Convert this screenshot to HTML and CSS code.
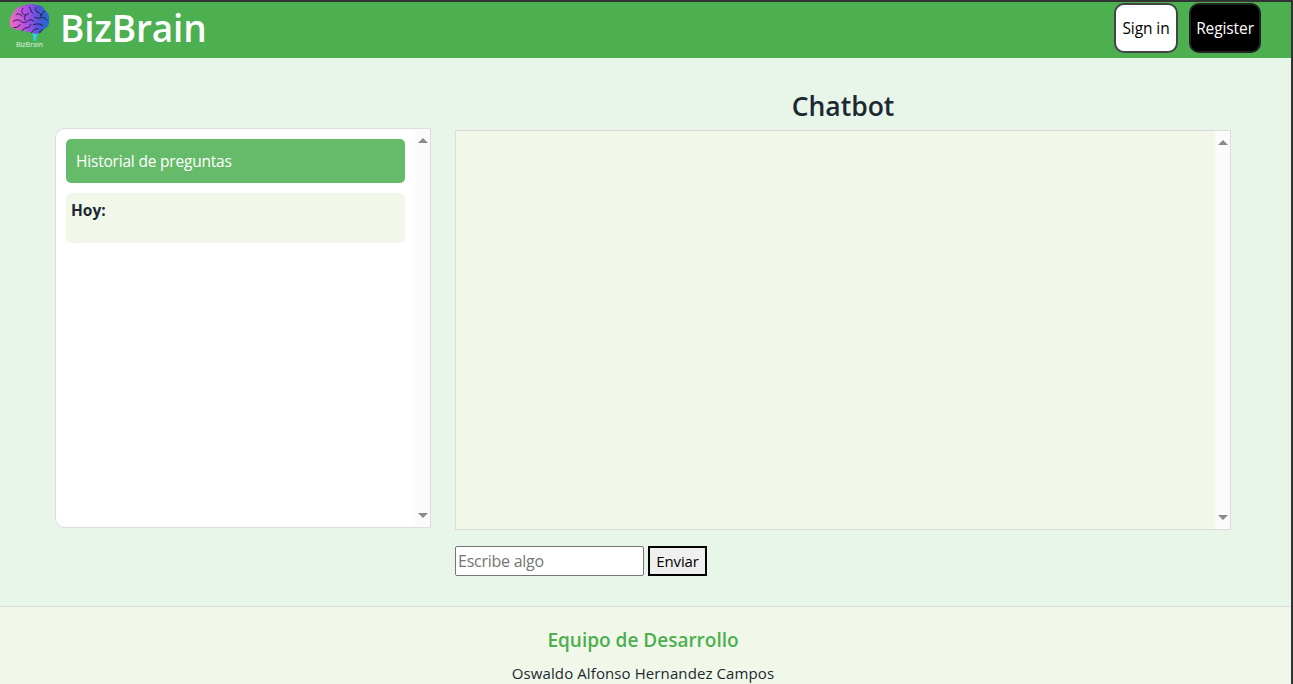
FILE: index.html
```html
<!DOCTYPE html>
<html lang="es">
<head>
<meta charset="utf-8">
<title>BizBrain</title>
<link rel="stylesheet" href="styles.css">
</head>
<body>
<div class="page">
  <header class="topbar">
    <div class="brand">
      <div class="logo">
        <svg class="brain" viewBox="0.5 1 39 37" width="41" height="38" aria-hidden="true">
          <defs>
            <linearGradient id="bg" x1="0" y1="0" x2="1" y2="0">
              <stop offset="0" stop-color="#f56cc0"/>
              <stop offset=".4" stop-color="#b44fe6"/>
              <stop offset=".75" stop-color="#4d55d8"/>
              <stop offset="1" stop-color="#1f6fd0"/>
            </linearGradient>
          </defs>
          <path d="M23 29l1 8h2l2-8z" fill="#2fd0ee"/>
          <path fill="url(#bg)" d="M1 21C0 17 2 13 4 10 6 5 10 3 14 3c3-2 9-3 13-1 4 0 7 2 8 5 3 2 5 6 4 10 1 4-2 8-6 9-1 3-4 4-7 4-2 0-3-1-4-2-3 1-6 0-8-2-2 1-6 1-9-1-3-1-4-2-4-5z"/>
          <g fill="none" stroke="#1b1b3a" stroke-width=".9" stroke-linecap="round">
            <path d="M7 11c2-1 5 0 6 2M14 5c-2 2-2 4 0 6 2 1 4 1 5-1M20 4c2 2 1 5 3 6M27 4c-2 2-1 4 1 5 2 0 3 2 3 4M35 8c-2 1-3 2-3 4"/>
            <path d="M4 18c3-2 6-2 8 0 2 2 5 1 7-1 2-1 4-1 5 1M16 12c-1 2-1 3 0 5M25 14c2 1 5 1 7 0 2 0 4 1 5 3"/>
            <path d="M5 24c3 0 5-1 6-3M13 27c1-2 3-3 5-3 2 0 3-2 3-3M24 21c3-1 7-1 9 1M22 29c1-2 3-4 6-4M30 29c0-2 1-2 3-3"/>
          </g>
        </svg>
        <span class="logo-name">BizBrain</span>
      </div>
      <h1 class="site-title">BizBrain</h1>
    </div>
    <nav class="auth">
      <button class="btn btn-light" type="button">Sign in</button>
      <button class="btn btn-dark" type="button">Register</button>
    </nav>
  </header>

  <main class="content">
    <aside class="history">
      <div class="history-body">
        <div class="history-head">Historial de preguntas</div>
        <div class="history-day"><strong>Hoy:</strong></div>
      </div>
      <div class="scrollbar"><span class="arrow-up"></span><span class="arrow-down"></span></div>
    </aside>
    <section class="chat">
      <h2 class="chat-title">Chatbot</h2>
      <div class="chat-box">
        <div class="chat-log"></div>
        <div class="scrollbar"><span class="arrow-up"></span><span class="arrow-down"></span></div>
      </div>
      <form class="chat-form">
        <input class="chat-input" type="text" placeholder="Escribe algo">
        <button class="chat-send" type="button">Enviar</button>
      </form>
    </section>
  </main>

  <footer class="footer">
    <h3 class="footer-title">Equipo de Desarrollo</h3>
    <p class="footer-name">Oswaldo Alfonso Hernandez Campos</p>
  </footer>
</div>
</body>
</html>
```
FILE: styles.css
```css
* { box-sizing: border-box; }
html, body { margin: 0; height: 100%; overflow: hidden; }
body {
  font-family: "Open Sans", "Noto Sans", sans-serif;
  color: #1c2833;
  background: #e8f5e9;
}
.page {
  height: 684px;
  border-top: 2px solid #333;
  border-right: 2px solid #333;
  display: flex;
  flex-direction: column;
  overflow: hidden;
}
.topbar {
  height: 56px;
  flex: none;
  background: #4caf50;
  display: flex;
  align-items: flex-start;
  justify-content: space-between;
  padding: 1px 30px 0 9px;
}
.brand { display: flex; align-items: flex-start; gap: 10px; }
.logo {
  width: 41px;
  height: 50px;
  margin-top: 1px;
  display: flex;
  flex-direction: column;
  align-items: center;
}
.brain { display: block; flex: none; }
.logo-name {
  font-size: 7px;
  line-height: 9px;
  margin-top: -2px;
  color: #e6f3e6;
  white-space: nowrap;
}
.site-title {
  margin: 0;
  font-size: 37px;
  line-height: 50px;
  font-weight: 600;
  letter-spacing: -.2px;
  color: #fff;
}
.auth { display: flex; gap: 11px; }
.btn {
  height: 50px;
  border-radius: 10px;
  font-family: inherit;
  font-size: 15.5px;
  letter-spacing: -.1px;
  padding: 0;
  border: 2px solid #444;
}
.btn-light { width: 64px; background: #fff; color: #000; }
.btn-dark { width: 72px; background: #000; color: #fff; border-color: #222; }
.content {
  flex: none;
  height: 549px;
  padding: 70px 60px 0 55px;
  display: flex;
  align-items: flex-start;
  gap: 24px;
  border-bottom: 1px solid #dcdcdc;
}
.history {
  width: 376px;
  height: 400px;
  flex: none;
  display: flex;
  background: #fff;
  border: 1px solid #dcdcdc;
  border-radius: 10px 0 0 10px;
  overflow: hidden;
}
.history-body {
  flex: 1;
  padding: 10px;
  display: flex;
  flex-direction: column;
  gap: 10px;
}
.history-head {
  height: 44px;
  padding: 0 10px;
  display: flex;
  align-items: center;
  background: #66bb6a;
  border-radius: 5px;
  color: #fff;
  font-size: 15.5px;
  letter-spacing: -.2px;
}
.history-day {
  height: 50px;
  padding: 7px 5px;
  background: #f1f8e9;
  border-radius: 5px;
  font-size: 15.5px;
  line-height: 21px;
}
.history-day strong { font-weight: 700; letter-spacing: 0; }
.scrollbar {
  width: 15px;
  flex: none;
  background: #fbfbfb;
  display: flex;
  flex-direction: column;
  justify-content: space-between;
  align-items: center;
  padding: 9px 0;
}
.arrow-up, .arrow-down {
  width: 0;
  height: 0;
  border-left: 5px solid transparent;
  border-right: 5px solid transparent;
}
.arrow-up { border-bottom: 5px solid #8a8a8a; }
.arrow-down { border-top: 5px solid #8a8a8a; }
.chat { width: 776px; flex: none; margin-top: -42px; }
.chat-title {
  margin: 0;
  height: 44px;
  text-align: center;
  font-size: 26.5px;
  line-height: 40px;
  font-weight: 600;
}
.chat-box {
  height: 400px;
  display: flex;
  background: #f1f8e9;
  border: 1px solid #dcdcdc;
}
.chat-log { flex: 1; }
.chat-form {
  margin-top: 16px;
  display: flex;
  gap: 4px;
}
.chat-input {
  width: 189px;
  height: 30px;
  padding: 1px 2px;
  border: 1px solid #767676;
  border-radius: 2px;
  background: #fff;
  font-family: inherit;
  font-size: 16px;
  letter-spacing: -.25px;
}
.chat-input::placeholder { color: #757575; opacity: 1; }
.chat-send {
  width: 59px;
  height: 30px;
  padding: 0;
  border: 2px solid #000;
  background: #efefef;
  color: #000;
  font-family: inherit;
  font-size: 15px;
  letter-spacing: -.1px;
}
.footer {
  flex: 1;
  min-height: 0;
  padding-right: 5px;
  background: #f1f8e9;
  text-align: center;
}
.footer-title {
  margin: 20px 0 0;
  color: #4caf50;
  font-size: 19px;
  line-height: 27px;
  font-weight: 600;
}
.footer-name {
  margin: 8px 0 0;
  font-size: 15px;
  line-height: 22px;
  letter-spacing: .1px;
}
```
